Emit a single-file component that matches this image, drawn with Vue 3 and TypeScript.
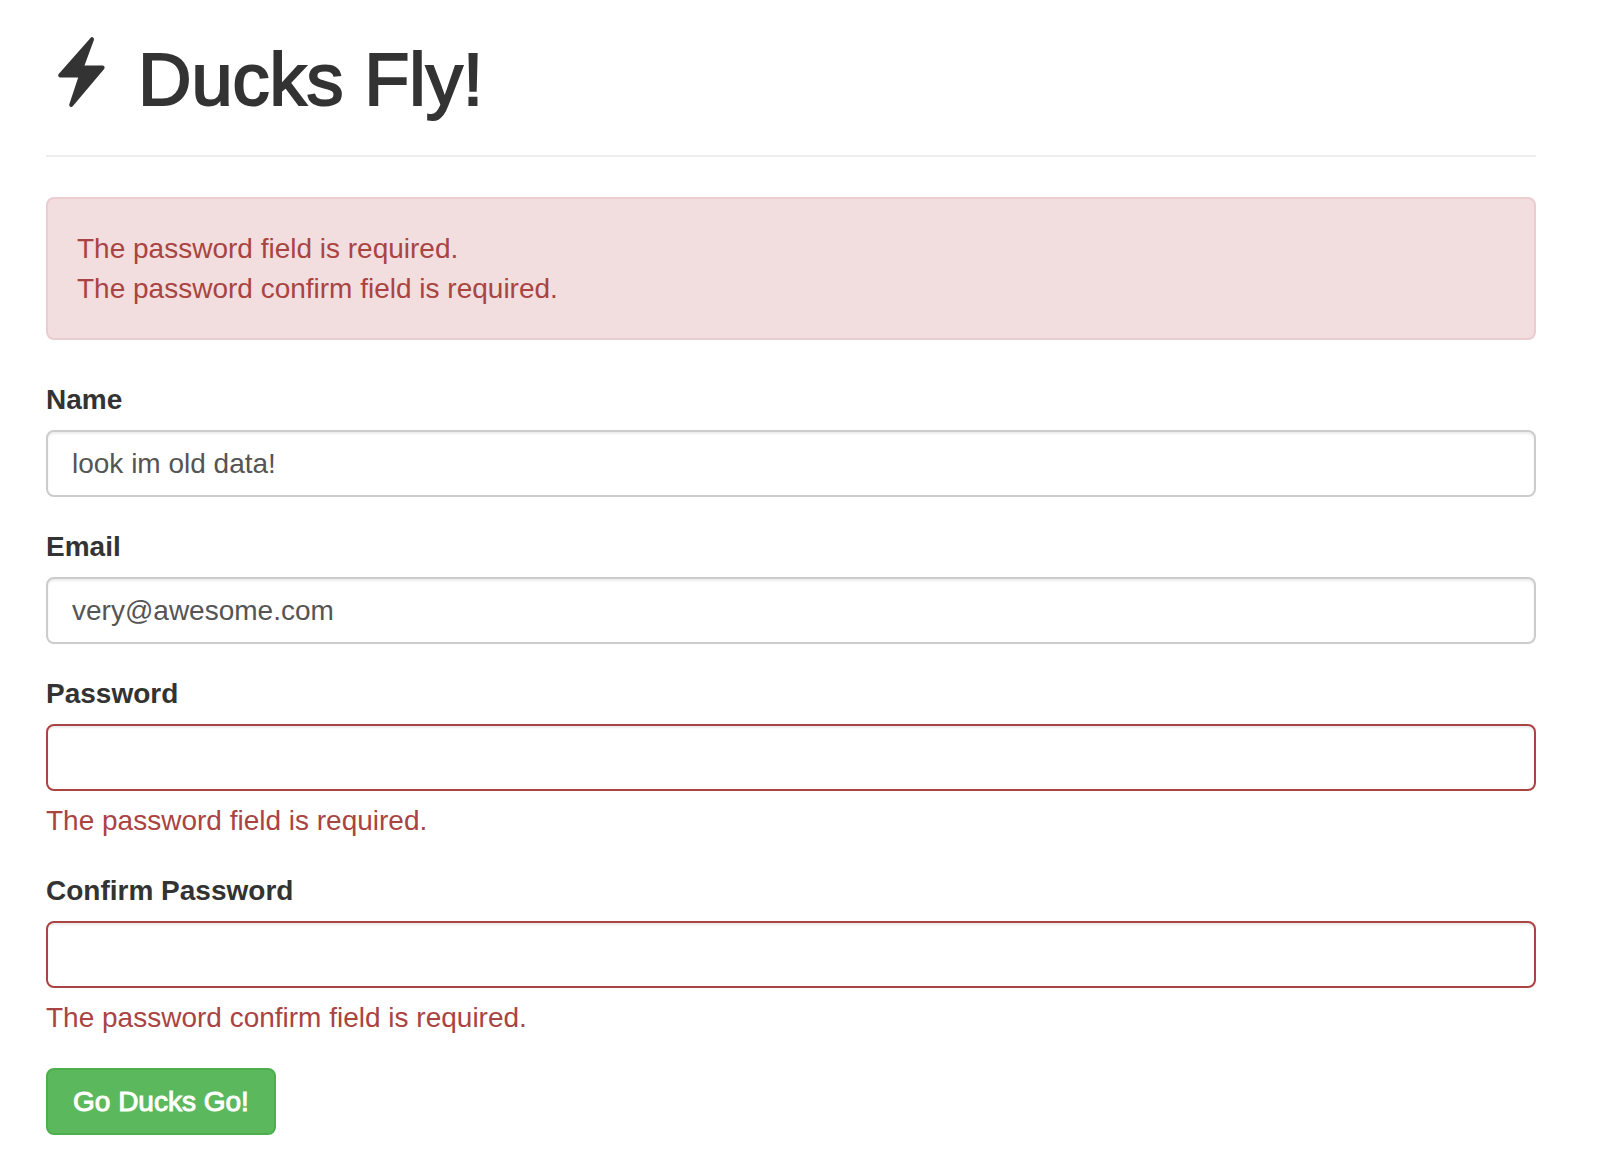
<script setup lang="ts">
import { computed, reactive } from 'vue'

interface Field {
  id: string
  label: string
  type: string
  error?: string
}

const fields: Field[] = [
  { id: 'name', label: 'Name', type: 'text' },
  { id: 'email', label: 'Email', type: 'email' },
  { id: 'password', label: 'Password', type: 'password', error: 'The password field is required.' },
  {
    id: 'password_confirm',
    label: 'Confirm Password',
    type: 'password',
    error: 'The password confirm field is required.',
  },
]

const values = reactive<Record<string, string>>({
  name: 'look im old data!',
  email: 'very@awesome.com',
  password: '',
  password_confirm: '',
})

const errors = computed(() => fields.filter((f) => f.error).map((f) => f.error))
</script>

<template>
  <main class="container">
    <header class="page-header">
      <h1>
        <svg class="flash" viewBox="0 0 72 72" aria-hidden="true">
          <path d="M46 3.2 L35.6 31.6 H56.6 L25.2 69 L35 39.4 H14.2 Z" />
        </svg>
        <span>Ducks Fly!</span>
      </h1>
    </header>

    <div class="alert" role="alert">
      <div v-for="message in errors" :key="message">{{ message }}</div>
    </div>

    <form novalidate @submit.prevent>
      <div v-for="field in fields" :key="field.id" class="form-group" :class="{ 'has-error': field.error }">
        <label :for="field.id">{{ field.label }}</label>
        <input :id="field.id" v-model="values[field.id]" :type="field.type" :name="field.id" />
        <p v-if="field.error" class="help">{{ field.error }}</p>
      </div>
      <button type="submit">Go Ducks Go!</button>
    </form>
  </main>
</template>

<style>
body {
  background: #fff;
}
</style>

<style scoped>
.container,
.container * {
  box-sizing: border-box;
}

.container {
  padding: 36px 64px 36px 46px;
  color: #333;
  font-family: "Liberation Sans", Arial, sans-serif;
  font-size: 28px;
  line-height: 40px;
}

.page-header {
  padding-bottom: 36px;
  margin-bottom: 40px;
  border-bottom: 2px solid #eee;
}

h1 {
  display: flex;
  align-items: flex-start;
  gap: 20px;
  margin: 0;
  font-size: 74px;
  font-weight: 400;
  line-height: 78px;
  -webkit-text-stroke: 2px #333;
}

h1 span {
  padding-top: 5px;
}

.flash {
  width: 72px;
  height: 72px;
  fill: #333;
  stroke: #333;
  stroke-width: 4px;
  stroke-linejoin: round;
}

.alert {
  padding: 30px 29px 29px;
  margin-bottom: 40px;
  color: #a94442;
  background: #f2dede;
  border: 2px solid #ebccd1;
  border-radius: 8px;
}

.form-group {
  margin-bottom: 30px;
}

label {
  display: block;
  margin-bottom: 10px;
  font-weight: 700;
}

input {
  display: block;
  width: 100%;
  height: 67px;
  padding: 12px 24px;
  color: #555;
  font: inherit;
  background: #fff;
  border: 2px solid #ccc;
  border-radius: 8px;
  box-shadow: inset 0 2px 2px rgba(0, 0, 0, 0.075);
  outline: none;
}

.has-error input {
  border-color: #a94442;
}

.help {
  margin: 10px 0 0;
  color: #a94442;
}

button {
  display: block;
  height: 67px;
  padding: 0 25px;
  color: #fff;
  font: inherit;
  background: #5cb85c;
  border: 2px solid #4cae4c;
  border-radius: 8px;
  -webkit-text-stroke: 1px #fff;
}
</style>
